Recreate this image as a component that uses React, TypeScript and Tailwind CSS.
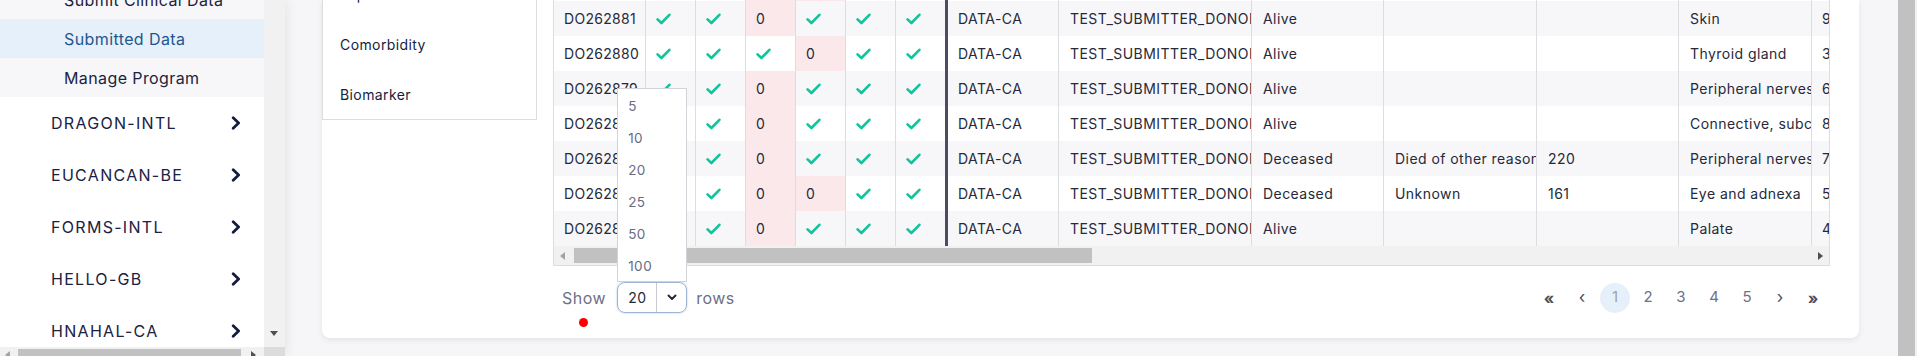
import React from "react";

type Row = {
  id: string;
  c: number[];
  vital: string;
  cause: string;
  surv: string;
  site: string;
  age: string;
};

const rows: Row[] = [
  { id: "DO262882", c: [1, 1, 0, 0, 1, 1], vital: "Alive", cause: "", surv: "", site: "Breast", age: "52" },
  { id: "DO262881", c: [1, 1, 0, 1, 1, 1], vital: "Alive", cause: "", surv: "", site: "Skin", age: "93" },
  { id: "DO262880", c: [1, 1, 1, 0, 1, 1], vital: "Alive", cause: "", surv: "", site: "Thyroid gland", age: "35" },
  { id: "DO262879", c: [1, 1, 0, 1, 1, 1], vital: "Alive", cause: "", surv: "", site: "Peripheral nerves and autonomic nervous system", age: "62" },
  { id: "DO262878", c: [1, 1, 0, 1, 1, 1], vital: "Alive", cause: "", surv: "", site: "Connective, subcutaneous and other soft tissues", age: "81" },
  { id: "DO262877", c: [1, 1, 0, 1, 1, 1], vital: "Deceased", cause: "Died of other reasons", surv: "220", site: "Peripheral nerves and autonomic nervous system", age: "70" },
  { id: "DO262876", c: [1, 1, 0, 0, 1, 1], vital: "Deceased", cause: "Unknown", surv: "161", site: "Eye and adnexa", age: "57" },
  { id: "DO262875", c: [1, 1, 0, 1, 1, 1], vital: "Alive", cause: "", surv: "", site: "Palate", age: "44" },
];

const programs = ["DRAGON-INTL", "EUCANCAN-BE", "FORMS-INTL", "HELLO-GB", "HNAHAL-CA"];

function Check() {
  return (
    <svg width="15" height="12" viewBox="0 0 15 12" fill="none">
      <path d="M1.6 6.4 L5.4 10 L13.4 1.8" stroke="#10c49b" strokeWidth="2.6" strokeLinecap="round" strokeLinejoin="round" />
    </svg>
  );
}

function Chevron() {
  return (
    <svg width="10" height="14" viewBox="0 0 10 14" fill="none">
      <path d="M2.2 1.8 L7.6 7 L2.2 12.2" stroke="#151c3d" strokeWidth="2.8" strokeLinecap="round" strokeLinejoin="round" />
    </svg>
  );
}

function Cell({ w, children, cls = "" }: { w: string; children?: React.ReactNode; cls?: string }) {
  return (
    <div className={`${w} h-full shrink-0 flex items-center overflow-hidden whitespace-nowrap ${cls}`}>{children}</div>
  );
}

export default function App() {
  return (
    <div className="w-[1917px] h-[356px] overflow-hidden flex bg-[#f6f6f8] font-['Inter','Liberation_Sans',sans-serif] text-[#262939]">
      {/* Sidebar */}
      <div className="w-[285px] shrink-0 flex flex-col relative z-10 shadow-[3px_0_10px_rgba(0,0,0,0.06)]">
        <div className="h-[347px] flex shrink-0">
          <div className="w-[264px] bg-white overflow-hidden">
            <div className="-mt-[19px]">
              <div className="h-[38px] bg-[#f7f7f9] flex items-center pl-[64px] text-[16px] tracking-[0.4px] text-[#1c2340]">Submit Clinical Data</div>
              <div className="h-[39px] bg-[#e5f0fa] flex items-center pl-[64px] text-[16px] tracking-[0.4px] text-[#22568f]">Submitted Data</div>
              <div className="h-[39px] bg-[#f7f7f9] flex items-center pl-[64px] text-[16px] tracking-[0.4px] text-[#1c2340]">Manage Program</div>
              {programs.map((p) => (
                <div key={p} className="h-[52px] flex items-center justify-between pl-[51px] pr-[23px]">
                  <span className="text-[16px] tracking-[1.3px] text-[#1a2142]">{p}</span>
                  <Chevron />
                </div>
              ))}
            </div>
          </div>
          <div className="w-[21px] bg-[#f1f1f1] relative">
            <div className="absolute left-[6px] top-[331px] w-0 h-0 border-l-[4px] border-r-[4px] border-t-[5px] border-l-transparent border-r-transparent border-t-[#505050]" />
          </div>
        </div>
        <div className="h-[17px] flex shrink-0">
          <div className="w-[264px] bg-[#f1f1f1] flex items-start relative">
            <div className="absolute left-[5px] top-[4px] w-0 h-0 border-t-[4px] border-b-[4px] border-r-[5px] border-t-transparent border-b-transparent border-r-[#a3a3a3]" />
            <div className="ml-[18px] mt-[2px] w-[223px] h-[13px] bg-[#c1c1c1]" />
            <div className="absolute left-[251px] top-[4px] w-0 h-0 border-t-[4px] border-b-[4px] border-l-[5px] border-t-transparent border-b-transparent border-l-[#505050]" />
          </div>
          <div className="w-[21px] bg-[#dcdcdc]" />
        </div>
      </div>

      {/* Main */}
      <div className="flex-1 flex">
        <div className="ml-[37px] w-[1537px] h-[338px] bg-white rounded-b-[8px] shadow-[0_2px_6px_rgba(0,0,0,0.08)] flex items-start">
          {/* Tabs panel */}
          <div className="w-[215px] h-[120px] shrink-0 border-l border-r border-b border-[#dcdde1] overflow-hidden">
            <div className="-mt-[31px]">
              {["Exposure", "Comorbidity", "Biomarker"].map((t) => (
                <div key={t} className="h-[50px] flex items-center pl-[17px] text-[14px] tracking-[0.4px] text-[#151c3d]">{t}</div>
              ))}
            </div>
          </div>

          {/* Table + footer */}
          <div className="ml-[16px] w-[1277px] shrink-0 flex flex-col">
            <div className="border-l border-r border-b border-[#dcdde1] overflow-hidden h-[266px] flex flex-col">
              <div className="-mt-[34px]">
                {rows.map((r, i) => (
                  <div key={r.id} className={`h-[35px] flex text-[14px] tracking-[0.45px] ${i % 2 === 1 ? "bg-[#f7f7f9]" : "bg-white"}`}>
                    <Cell w="w-[91px]" cls="pl-[10px] tracking-[0.3px]">{r.id}</Cell>
                    {r.c.map((v, j) => (
                      <Cell key={j} w="w-[50px]" cls={`border-l border-[#dcdde1] pl-[10px] ${v ? "" : "bg-[#fbe8eb]"}`}>
                        {v ? <Check /> : <span>0</span>}
                      </Cell>
                    ))}
                    <Cell w="w-[113px]" cls="border-l-[3px] border-[#4b4e63] pl-[10px]">DATA-CA</Cell>
                    <Cell w="w-[193px]" cls="border-l border-[#dcdde1] pl-[11px]">TEST_SUBMITTER_DONOR_{r.id.slice(2)}</Cell>
                    <Cell w="w-[132px]" cls="border-l border-[#dcdde1] pl-[11px]">{r.vital}</Cell>
                    <Cell w="w-[153px]" cls="border-l border-[#dcdde1] pl-[11px]">{r.cause}</Cell>
                    <Cell w="w-[142px]" cls="border-l border-[#dcdde1] pl-[11px]">{r.surv}</Cell>
                    <Cell w="w-[133px]" cls="border-l border-[#dcdde1] pl-[11px]">{r.site}</Cell>
                    <Cell w="w-[60px]" cls="border-l border-[#dcdde1] pl-[10px]">{r.age}</Cell>
                  </div>
                ))}
              </div>
              {/* horizontal scrollbar */}
              <div className="h-[19px] bg-[#f1f1f1] flex items-start relative">
                <div className="absolute left-[6px] top-[6px] w-0 h-0 border-t-[4px] border-b-[4px] border-r-[5px] border-t-transparent border-b-transparent border-r-[#a3a3a3]" />
                <div className="ml-[20px] mt-[2px] w-[518px] h-[15px] bg-[#c1c1c1]" />
                <div className="absolute right-[6px] top-[6px] w-0 h-0 border-t-[4px] border-b-[4px] border-l-[5px] border-t-transparent border-b-transparent border-l-[#505050]" />
              </div>
            </div>

            {/* Footer */}
            <div className="mt-[16px] flex items-center justify-between">
              <div className="relative flex items-center pl-[9px] text-[16px] tracking-[0.5px] text-[#6e7088]">
                <span>Show</span>
                <div className="relative ml-[11px]">
                  <div className="absolute bottom-full left-0 w-[70px] h-[194px] bg-white border border-[#d2d3d9] pt-[1px] z-20">
                    {["5", "10", "20", "25", "50", "100"].map((o) => (
                      <div key={o} className="h-[32px] flex items-center pl-[10px] text-[13.5px] text-[#696b83]">{o}</div>
                    ))}
                  </div>
                  <div className="w-[70px] h-[31px] rounded-[8px] border border-[#9fb4d3] shadow-[0_0_2px_rgba(80,130,200,0.5)] flex items-center">
                    <div className="w-[39px] h-full flex items-center pl-[10px] text-[14px] text-[#262939] border-r border-[#c8cad3]">20</div>
                    <div className="flex-1 flex items-center justify-center">
                      <svg width="10" height="7" viewBox="0 0 10 7" fill="none">
                        <path d="M1.5 1.5 L5 5 L8.5 1.5" stroke="#262939" strokeWidth="2" strokeLinecap="round" strokeLinejoin="round" />
                      </svg>
                    </div>
                  </div>
                </div>
                <span className="ml-[9px]">rows</span>
                <div className="absolute left-[26px] top-[36px] w-[9px] h-[9px] rounded-full bg-[#ff0000]" />
              </div>
              <div className="flex items-center gap-[3px] pr-[2px] text-[15px] text-[#6e7088]">
                <div className="w-[30px] h-[30px] flex items-center justify-center text-[#4b4e63] font-bold text-[16px]">«</div>
                <div className="w-[30px] h-[30px] flex items-center justify-center text-[#4b4e63] text-[17px]">‹</div>
                <div className="w-[30px] h-[30px] flex items-center justify-center rounded-full bg-[#e5f0fa] text-[#9ea0b3]">1</div>
                <div className="w-[30px] h-[30px] flex items-center justify-center">2</div>
                <div className="w-[30px] h-[30px] flex items-center justify-center">3</div>
                <div className="w-[30px] h-[30px] flex items-center justify-center">4</div>
                <div className="w-[30px] h-[30px] flex items-center justify-center">5</div>
                <div className="w-[30px] h-[30px] flex items-center justify-center text-[#4b4e63] text-[17px]">›</div>
                <div className="w-[30px] h-[30px] flex items-center justify-center text-[#4b4e63] font-bold text-[16px]">»</div>
              </div>
            </div>
          </div>
        </div>
        <div className="ml-auto w-[19px] h-full bg-[#c1c1c1] border-r-[2px] border-[#f1f1f1]" />
      </div>
    </div>
  );
}
